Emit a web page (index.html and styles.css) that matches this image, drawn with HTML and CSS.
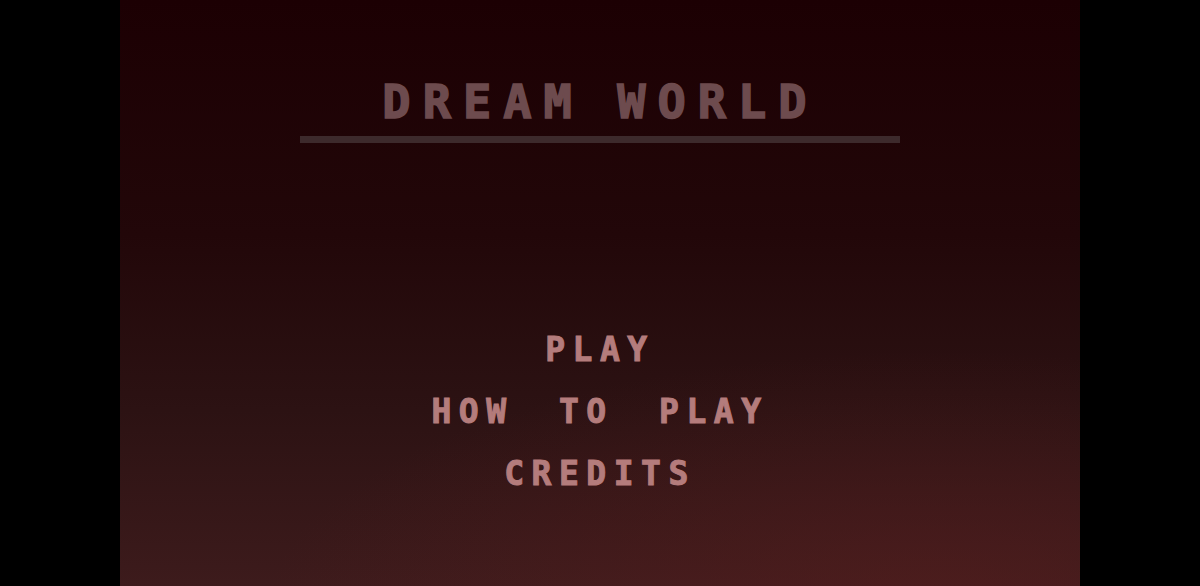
FILE: index.html
```html
<!DOCTYPE html>
<html lang="en">
<head>
    <meta charset="UTF-8">
    <meta name="viewport" content="width=device-width, initial-scale=1.0">
    <title>Dream World</title>
    <link rel="stylesheet" href="styles.css">
</head>
<body>
    <div class="screen">
        <header class="title-block">
            <h1 class="game-title">DREAM WORLD</h1>
            <div class="title-rule"></div>
        </header>
        <nav class="menu">
            <a href="#" class="menu-item">PLAY</a>
            <a href="#" class="menu-item">HOW TO PLAY</a>
            <a href="#" class="menu-item">CREDITS</a>
        </nav>
    </div>
</body>
</html>
```

FILE: styles.css
```css
html, body {
    margin: 0;
    padding: 0;
    height: 100%;
}

body {
    background-color: #000;
    display: flex;
    justify-content: center;
    font-family: "DejaVu Sans Mono", "Liberation Mono", monospace;
    font-weight: bold;
}

.screen {
    width: 960px;
    height: 586px;
    display: flex;
    flex-direction: column;
    align-items: center;
    background:
        radial-gradient(ellipse 70% 45% at 85% 105%, rgba(90, 30, 30, 0.55), rgba(90, 30, 30, 0) 100%),
        linear-gradient(to bottom, #1c0003 0%, #220709 40%, #2c1213 70%, #3d1b1c 100%);
}

.title-block {
    display: flex;
    flex-direction: column;
    align-items: center;
    padding-top: 78px;
}

/* chunky look: fatten the glyphs with a stroke in the same colour */
.game-title {
    margin: 0;
    font-size: 47px;
    line-height: 47px;
    font-weight: bold;
    letter-spacing: 12px;
    word-spacing: -7px;
    padding-left: 1px;
    color: #6d4b4e;
    -webkit-text-stroke: 1.5px #6d4b4e;
}

.title-rule {
    width: 600px;
    height: 7px;
    margin-top: 11px;
    background-color: #3d2a2c;
}

.menu {
    display: flex;
    flex-direction: column;
    align-items: center;
    margin-top: 176px;
}

.menu-item {
    font-size: 33px;
    line-height: 62px;
    letter-spacing: 7.5px;
    word-spacing: 18px;
    color: #b47c7c;
    -webkit-text-stroke: 1px #b47c7c;
    text-decoration: none;
}
```
